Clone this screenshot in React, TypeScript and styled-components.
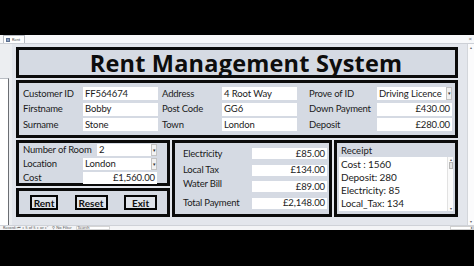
import React from "react";
import styled, { createGlobalStyle } from "styled-components";

const GlobalStyle = createGlobalStyle`
  html, body {
    margin: 0;
    padding: 0;
    background: #000;
  }
  * {
    box-sizing: border-box;
  }
  body {
    font-family: Lato, "Liberation Sans", sans-serif;
    color: #151515;
  }
`;

const Screen = styled.div`
  width: 474px;
  height: 266px;
  background: #000;
  display: flex;
  flex-direction: column;
  overflow: hidden;
`;

const Band = styled.div<{ $h: number }>`
  height: ${(p) => p.$h}px;
  flex: none;
  background: #000;
`;

const AccessWindow = styled.div`
  height: 195px;
  flex: none;
  display: flex;
  flex-direction: column;
  background: #eef0f3;
`;

const TabStrip = styled.div`
  height: 9px;
  display: flex;
  align-items: flex-end;
  padding: 0 2px 0 3px;
  background: #f7f8fa;
  border-bottom: 1px solid #cdd0d6;
`;

const Tab = styled.div`
  height: 8px;
  display: flex;
  align-items: center;
  gap: 2px;
  padding: 0 4px 0 2px;
  background: #fff;
  border: 1px solid #b9bdc4;
  border-bottom: none;
  font-size: 4px;
  line-height: 1;
  color: #444;
`;

const TabIcon = styled.span`
  width: 4px;
  height: 4px;
  background: #8aa0c0;
  border: 1px solid #5b6f8f;
`;

const CloseGlyph = styled.span`
  margin-left: auto;
  align-self: center;
  font-size: 6px;
  line-height: 1;
  color: #666;
`;

const Body = styled.div`
  flex: 1;
  display: flex;
  min-height: 0;
`;

const NavPane = styled.div`
  width: 12px;
  flex: none;
  padding-top: 34px;
  background: #eceef1;
  display: flex;
`;

const NavStrip = styled.div`
  width: 9px;
  background: #fff;
  border-top: 1px solid #b9bdc4;
  border-right: 1px solid #6b6e73;
`;

const FormArea = styled.div`
  flex: 1;
  background: #e3e6ec;
  padding: 3px 9px 0 4px;
  display: flex;
  flex-direction: column;
  gap: 2px;
`;

const Panel = styled.div`
  border: 3px solid #0b0b0b;
  background: #d5dae3;
`;

const TitlePanel = styled(Panel)`
  height: 31px;
  display: flex;
  align-items: center;
  justify-content: center;
  padding-left: 18px;
  font-family: "Open Sans", "Liberation Sans", sans-serif;
  font-size: 23.5px;
  font-weight: 700;
  letter-spacing: 0.2px;
  color: #0d0d0d;
`;

const CustomerPanel = styled(Panel)`
  height: 58px;
  display: grid;
  grid-template-columns: 60px 75px 64px 75px 80px 75px;
  grid-auto-rows: 13px;
  row-gap: 2.5px;
  align-items: center;
  padding: 4px 0 0 4px;
`;

const Label = styled.div<{ $indent?: number; $shift?: number }>`
  font-size: 9.5px;
  letter-spacing: -0.2px;
  line-height: 1;
  white-space: nowrap;
  padding-left: ${(p) => p.$indent ?? 0}px;
  position: relative;
  top: ${(p) => p.$shift ?? 0}px;
  color: #1b1b1b;
`;

const Field = styled.div<{ $right?: boolean; $inset?: number }>`
  height: 100%;
  margin-left: ${(p) => p.$inset ?? 0}px;
  background: #fff;
  display: flex;
  align-items: center;
  justify-content: ${(p) => (p.$right ? "flex-end" : "flex-start")};
  padding: 0 2px;
  font-size: 9.5px;
  letter-spacing: -0.1px;
  line-height: 1;
  white-space: nowrap;
  color: #1b1b1b;
`;

const DropButton = styled.span`
  margin-left: auto;
  margin-right: -2px;
  width: 6px;
  height: 100%;
  background: #f2f2f2;
  border: 1px solid #c3c3c3;
  display: flex;
  align-items: center;
  justify-content: center;
  font-size: 5px;
  color: #333;
`;

const BottomRow = styled.div`
  height: 77px;
  display: grid;
  grid-template-columns: 154px 160px 124px;
  column-gap: 2px;
`;

const LeftColumn = styled.div`
  display: flex;
  flex-direction: column;
  gap: 2px;
`;

const RoomPanel = styled(Panel)`
  height: 46px;
  display: grid;
  grid-template-columns: 60px 74px;
  grid-auto-rows: 12px;
  row-gap: 2px;
  align-items: center;
  padding: 1px 0 0 4px;
`;

const ButtonPanel = styled(Panel)`
  flex: 1;
  display: flex;
  align-items: center;
  justify-content: space-between;
  padding: 0 10px 0 11px;
`;

const ActionButton = styled.button<{ $w: number }>`
  width: ${(p) => p.$w}px;
  height: 15px;
  padding: 0;
  border: 2.5px solid #050505;
  background: #dfe3ea;
  font-family: Lato, "Liberation Sans", sans-serif;
  font-size: 10px;
  font-weight: 700;
  line-height: 1;
  color: #111;
  display: flex;
  align-items: center;
  justify-content: center;
  overflow: visible;
`;

const BillsPanel = styled(Panel)`
  display: grid;
  grid-template-columns: 69px 75px;
  grid-auto-rows: 11px;
  row-gap: 5.5px;
  align-items: center;
  padding: 5px 0 0 8px;
`;

const ReceiptPanel = styled(Panel)`
  display: flex;
  flex-direction: column;
  padding: 0 2px 3px 2px;
`;

const Caption = styled.div`
  height: 14px;
  display: flex;
  align-items: center;
  padding-left: 2px;
  font-size: 9.5px;
  color: #1b1b1b;
`;

const TextBox = styled.div`
  flex: 1;
  background: #fff;
  display: flex;
  min-height: 0;
`;

const Lines = styled.div`
  flex: 1;
  padding: 1px 2px 0;
  font-size: 10px;
  letter-spacing: -0.1px;
  line-height: 13px;
  color: #1b1b1b;
`;

const ScrollTrack = styled.div`
  width: 6px;
  display: flex;
  flex-direction: column;
  align-items: center;
  background: #fafafa;
  border-left: 1px solid #e2e2e2;
  font-size: 4px;
  color: #555;
`;

const Arrow = styled.span`
  height: 5px;
  line-height: 5px;
`;

const Thumb = styled.span`
  width: 4px;
  height: 7px;
  background: #e4e4e4;
  border: 1px solid #b6b6b6;
`;

const Spacer = styled.span`
  flex: 1;
`;

const VScroll = styled.div`
  width: 7px;
  flex: none;
  background: #fbfbfc;
  border-left: 1px solid #d3d6db;
  display: flex;
  flex-direction: column;
  align-items: center;
  justify-content: space-between;
  padding: 1px 0;
  font-size: 4px;
  color: #666;
`;

const StatusBar = styled.div`
  height: 5px;
  flex: none;
  display: flex;
  align-items: center;
  gap: 4px;
  padding: 0 0 0 3px;
  background: #f3f4f6;
  border-top: 1px solid #cfd2d8;
  font-size: 4px;
  line-height: 1;
  color: #555;
  white-space: nowrap;
`;

const SearchBox = styled.span`
  width: 34px;
  height: 4px;
  background: #fff;
  border: 1px solid #d5d5d5;
  display: flex;
  align-items: center;
  padding-left: 1px;
`;

const HScroll = styled.span`
  margin-left: auto;
  width: 24px;
  height: 4px;
  background: #fff;
  border: 1px solid #d0d0d0;
  display: flex;
  align-items: center;
  justify-content: flex-end;
`;

const receiptLines = ["Cost : 1560", "Deposit: 280", "Electricity: 85", "Local_Tax: 134"];

export default function App() {
  return (
    <>
      <GlobalStyle />
      <Screen>
        <Band $h={35} />
        <AccessWindow>
          <TabStrip>
            <Tab>
              <TabIcon />
              Rent
            </Tab>
            <CloseGlyph>×</CloseGlyph>
          </TabStrip>
          <Body>
            <NavPane>
              <NavStrip />
            </NavPane>
            <FormArea>
              <TitlePanel>Rent Management System</TitlePanel>

              <CustomerPanel>
                <Label>Customer ID</Label>
                <Field>FF564674</Field>
                <Label $indent={4}>Address</Label>
                <Field>4 Root Way</Field>
                <Label $indent={12}>Prove of ID</Label>
                <Field>
                  Driving Licence
                  <DropButton>▾</DropButton>
                </Field>

                <Label>Firstname</Label>
                <Field>Bobby</Field>
                <Label $indent={4}>Post Code</Label>
                <Field>GG6</Field>
                <Label $indent={12}>Down Payment</Label>
                <Field $right>£430.00</Field>

                <Label>Surname</Label>
                <Field>Stone</Field>
                <Label $indent={4}>Town</Label>
                <Field>London</Field>
                <Label $indent={12}>Deposit</Label>
                <Field $right>£280.00</Field>
              </CustomerPanel>

              <BottomRow>
                <LeftColumn>
                  <RoomPanel>
                    <Label>Number of Room</Label>
                    <Field $inset={14}>
                      2
                      <DropButton>▾</DropButton>
                    </Field>
                    <Label>Location</Label>
                    <Field>
                      London
                      <DropButton>▾</DropButton>
                    </Field>
                    <Label>Cost</Label>
                    <Field $right>£1,560.00</Field>
                  </RoomPanel>
                  <ButtonPanel>
                    <ActionButton $w={28}>Rent</ActionButton>
                    <ActionButton $w={33}>Reset</ActionButton>
                    <ActionButton $w={33}>Exit</ActionButton>
                  </ButtonPanel>
                </LeftColumn>

                <BillsPanel>
                  <Label>Electricity</Label>
                  <Field $right>£85.00</Field>
                  <Label>Local Tax</Label>
                  <Field $right>£134.00</Field>
                  <Label $shift={-3}>Water Bill</Label>
                  <Field $right>£89.00</Field>
                  <Label>Total Payment</Label>
                  <Field $right>£2,148.00</Field>
                </BillsPanel>

                <ReceiptPanel>
                  <Caption>Receipt</Caption>
                  <TextBox>
                    <Lines>
                      {receiptLines.map((line) => (
                        <div key={line}>{line}</div>
                      ))}
                    </Lines>
                    <ScrollTrack>
                      <Arrow>▴</Arrow>
                      <Thumb />
                      <Spacer />
                      <Arrow>▾</Arrow>
                    </ScrollTrack>
                  </TextBox>
                </ReceiptPanel>
              </BottomRow>
            </FormArea>
            <VScroll>
              <span>▴</span>
              <span>▾</span>
            </VScroll>
          </Body>
          <StatusBar>
            <span>Record: ⏮ ◂ 5 of 5 ▸ ⏭ ▸*</span>
            <span>⚲ No Filter</span>
            <SearchBox>Search</SearchBox>
            <HScroll>▸</HScroll>
          </StatusBar>
        </AccessWindow>
        <Band $h={36} />
      </Screen>
    </>
  );
}
